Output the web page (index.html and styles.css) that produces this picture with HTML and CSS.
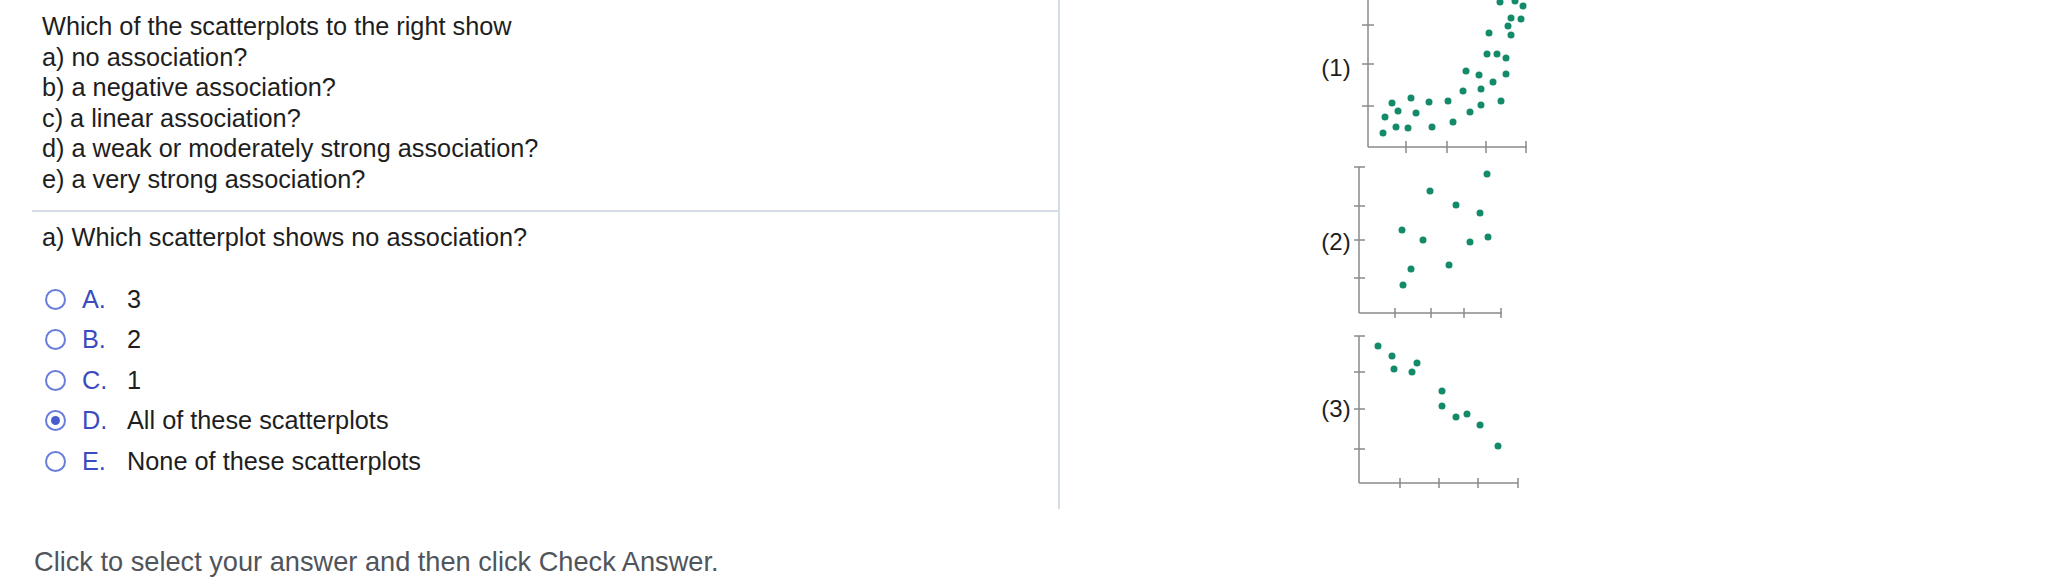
FILE: index.html
```html
<!DOCTYPE html>
<html lang="en">

<head>
  <meta charset="UTF-8">
  <meta name="viewport" content="width=device-width, initial-scale=1.0">
  <title>Scatterplot association</title>
  <link rel="stylesheet" href="styles.css">
</head>

<body>
  <div class="page">
    <div class="exercise">
      <div class="question-pane">
        <div class="prompt">
          <div>Which of the scatterplots to the right show</div>
          <div>a) no association?</div>
          <div>b) a negative association?</div>
          <div>c) a linear association?</div>
          <div>d) a weak or moderately strong association?</div>
          <div>e) a very strong association?</div>
        </div>

        <div class="part">
          <div class="part-title">a) Which scatterplot shows no association?</div>
          <ul class="choices">
            <li class="choice">
              <input type="radio" name="partA" value="A" />
              <span class="choice-letter">A.</span>
              <span>3</span>
            </li>
            <li class="choice">
              <input type="radio" name="partA" value="B" />
              <span class="choice-letter">B.</span>
              <span>2</span>
            </li>
            <li class="choice">
              <input type="radio" name="partA" value="C" />
              <span class="choice-letter">C.</span>
              <span>1</span>
            </li>
            <li class="choice">
              <input type="radio" name="partA" value="D" checked />
              <span class="choice-letter">D.</span>
              <span>All of these scatterplots</span>
            </li>
            <li class="choice">
              <input type="radio" name="partA" value="E" />
              <span class="choice-letter">E.</span>
              <span>None of these scatterplots</span>
            </li>
          </ul>
        </div>
      </div>

      <div class="plots">
        <div class="plot plot-first">
          <span class="plot-label">(1)</span>
          <svg width="180" height="175" viewBox="1354 -20 180 175">
            <g class="axis">
              <line x1="1369" y1="-20" x2="1369" y2="147" />
              <line x1="1369" y1="147" x2="1528" y2="147" />
              <line x1="1363" y1="25" x2="1375" y2="25" />
              <line x1="1363" y1="64" x2="1375" y2="64" />
              <line x1="1363" y1="106" x2="1375" y2="106" />
              <line x1="1407" y1="141" x2="1407" y2="153" />
              <line x1="1448" y1="141" x2="1448" y2="153" />
              <line x1="1487" y1="141" x2="1487" y2="153" />
              <line x1="1527" y1="141" x2="1527" y2="153" />
            </g>
            <g class="dots">
              <circle cx="1384" cy="133" r="3.5" />
              <circle cx="1386" cy="117" r="3.5" />
              <circle cx="1393" cy="103" r="3.5" />
              <circle cx="1399" cy="111" r="3.5" />
              <circle cx="1397" cy="127" r="3.5" />
              <circle cx="1409" cy="128" r="3.5" />
              <circle cx="1412" cy="98" r="3.5" />
              <circle cx="1417" cy="113" r="3.5" />
              <circle cx="1430" cy="102" r="3.5" />
              <circle cx="1433" cy="127" r="3.5" />
              <circle cx="1449" cy="101" r="3.5" />
              <circle cx="1454" cy="122" r="3.5" />
              <circle cx="1464" cy="91" r="3.5" />
              <circle cx="1467" cy="71" r="3.5" />
              <circle cx="1471" cy="112" r="3.5" />
              <circle cx="1480" cy="75" r="3.5" />
              <circle cx="1482" cy="89" r="3.5" />
              <circle cx="1482" cy="105" r="3.5" />
              <circle cx="1490" cy="33" r="3.5" />
              <circle cx="1488" cy="54" r="3.5" />
              <circle cx="1498" cy="54" r="3.5" />
              <circle cx="1494" cy="82" r="3.5" />
              <circle cx="1502" cy="101" r="3.5" />
              <circle cx="1507" cy="58" r="3.5" />
              <circle cx="1507" cy="74" r="3.5" />
              <circle cx="1509" cy="26" r="3.5" />
              <circle cx="1512" cy="35" r="3.5" />
              <circle cx="1512" cy="18" r="3.5" />
              <circle cx="1501" cy="2" r="3.5" />
              <circle cx="1516" cy="1" r="3.5" />
              <circle cx="1524" cy="6" r="3.5" />
              <circle cx="1522" cy="19" r="3.5" />
            </g>
          </svg>
        </div>

        <div class="plot">
          <span class="plot-label">(2)</span>
          <svg width="180" height="160" viewBox="1354 162 180 160">
            <g class="axis">
              <line x1="1360" y1="167" x2="1360" y2="313" />
              <line x1="1360" y1="313" x2="1503" y2="313" />
              <line x1="1355" y1="167" x2="1366" y2="167" />
              <line x1="1355" y1="206" x2="1366" y2="206" />
              <line x1="1355" y1="240" x2="1366" y2="240" />
              <line x1="1355" y1="278" x2="1366" y2="278" />
              <line x1="1396" y1="308" x2="1396" y2="318" />
              <line x1="1432" y1="308" x2="1432" y2="318" />
              <line x1="1465" y1="308" x2="1465" y2="318" />
              <line x1="1502" y1="308" x2="1502" y2="318" />
            </g>
            <g class="dots">
              <circle cx="1404" cy="285" r="3.5" />
              <circle cx="1412" cy="269" r="3.5" />
              <circle cx="1403" cy="230" r="3.5" />
              <circle cx="1424" cy="240" r="3.5" />
              <circle cx="1431" cy="191" r="3.5" />
              <circle cx="1450" cy="265" r="3.5" />
              <circle cx="1457" cy="205" r="3.5" />
              <circle cx="1471" cy="242" r="3.5" />
              <circle cx="1481" cy="213" r="3.5" />
              <circle cx="1489" cy="237" r="3.5" />
              <circle cx="1488" cy="174" r="3.5" />
            </g>
          </svg>
        </div>

        <div class="plot">
          <span class="plot-label">(3)</span>
          <svg width="180" height="160" viewBox="1354 329 180 160">
            <g class="axis">
              <line x1="1360" y1="336" x2="1360" y2="483" />
              <line x1="1360" y1="483" x2="1519" y2="483" />
              <line x1="1355" y1="336" x2="1366" y2="336" />
              <line x1="1355" y1="372" x2="1366" y2="372" />
              <line x1="1355" y1="409" x2="1366" y2="409" />
              <line x1="1355" y1="449" x2="1366" y2="449" />
              <line x1="1401" y1="478" x2="1401" y2="488" />
              <line x1="1440" y1="478" x2="1440" y2="488" />
              <line x1="1479" y1="478" x2="1479" y2="488" />
              <line x1="1519" y1="478" x2="1519" y2="488" />
            </g>
            <g class="dots">
              <circle cx="1379" cy="346" r="3.5" />
              <circle cx="1393" cy="356" r="3.5" />
              <circle cx="1395" cy="369" r="3.5" />
              <circle cx="1413" cy="372" r="3.5" />
              <circle cx="1418" cy="363" r="3.5" />
              <circle cx="1443" cy="391" r="3.5" />
              <circle cx="1443" cy="406" r="3.5" />
              <circle cx="1457" cy="417" r="3.5" />
              <circle cx="1468" cy="414" r="3.5" />
              <circle cx="1481" cy="425" r="3.5" />
              <circle cx="1499" cy="446" r="3.5" />
            </g>
          </svg>
        </div>
      </div>
    </div>

    <div class="footer">Click to select your answer and then click Check Answer.</div>
  </div>
</body>

</html>
```

FILE: styles.css
```css
body {
  margin: 0;
  padding: 0;
  background: #fff;
  color: #1e1e1e;
  font-family: "Liberation Sans", Arial, sans-serif;
  overflow: hidden;
}

.page {
  padding-left: 32px;
}

.exercise {
  display: flex;
}

.question-pane {
  width: 1026px;
  border-right: 2px solid #d6dce6;
  padding-bottom: 32.5px;
  font-size: 25.3px;
  line-height: 30.5px;
}

.prompt {
  padding: 11px 0 16px 10px;
  border-bottom: 2px solid #d6dce6;
}

.part {
  padding: 10px 0 0 10px;
}

.choices {
  list-style: none;
  margin: 31px 0 0 0;
  padding: 0;
  display: flex;
  flex-direction: column;
  gap: 10px;
}

.choice {
  display: flex;
  align-items: flex-start;
}

.choice input[type=radio] {
  -webkit-appearance: none;
  appearance: none;
  box-sizing: border-box;
  width: 21px;
  height: 21px;
  margin: 5px 16px 0 3px;
  border: 2px solid #6a7ddb;
  border-radius: 100%;
  background: #fff;
  display: flex;
  align-items: center;
  justify-content: center;
}

.choice input[type=radio]:checked::after {
  content: "";
  width: 9px;
  height: 9px;
  border-radius: 100%;
  background: #4a5dd0;
}

.choice-letter {
  width: 45px;
  color: #3a4cc0;
}

.plots {
  display: flex;
  flex-direction: column;
  gap: 7px;
  padding-left: 259px;
}

.plot {
  display: flex;
  align-items: center;
}

.plot-first {
  margin-top: -20px;
}

.plot-label {
  width: 34px;
  text-align: center;
  font-size: 24px;
  line-height: 1;
  color: #1e1e1e;
}

.plot svg {
  display: block;
}

.axis line {
  stroke: #8a8a8a;
  stroke-width: 1.5;
}

.dots circle {
  fill: #138a6a;
}

.footer {
  margin-top: 37px;
  padding-left: 2px;
  font-size: 27.2px;
  line-height: 32px;
  color: #50545b;
}
```
